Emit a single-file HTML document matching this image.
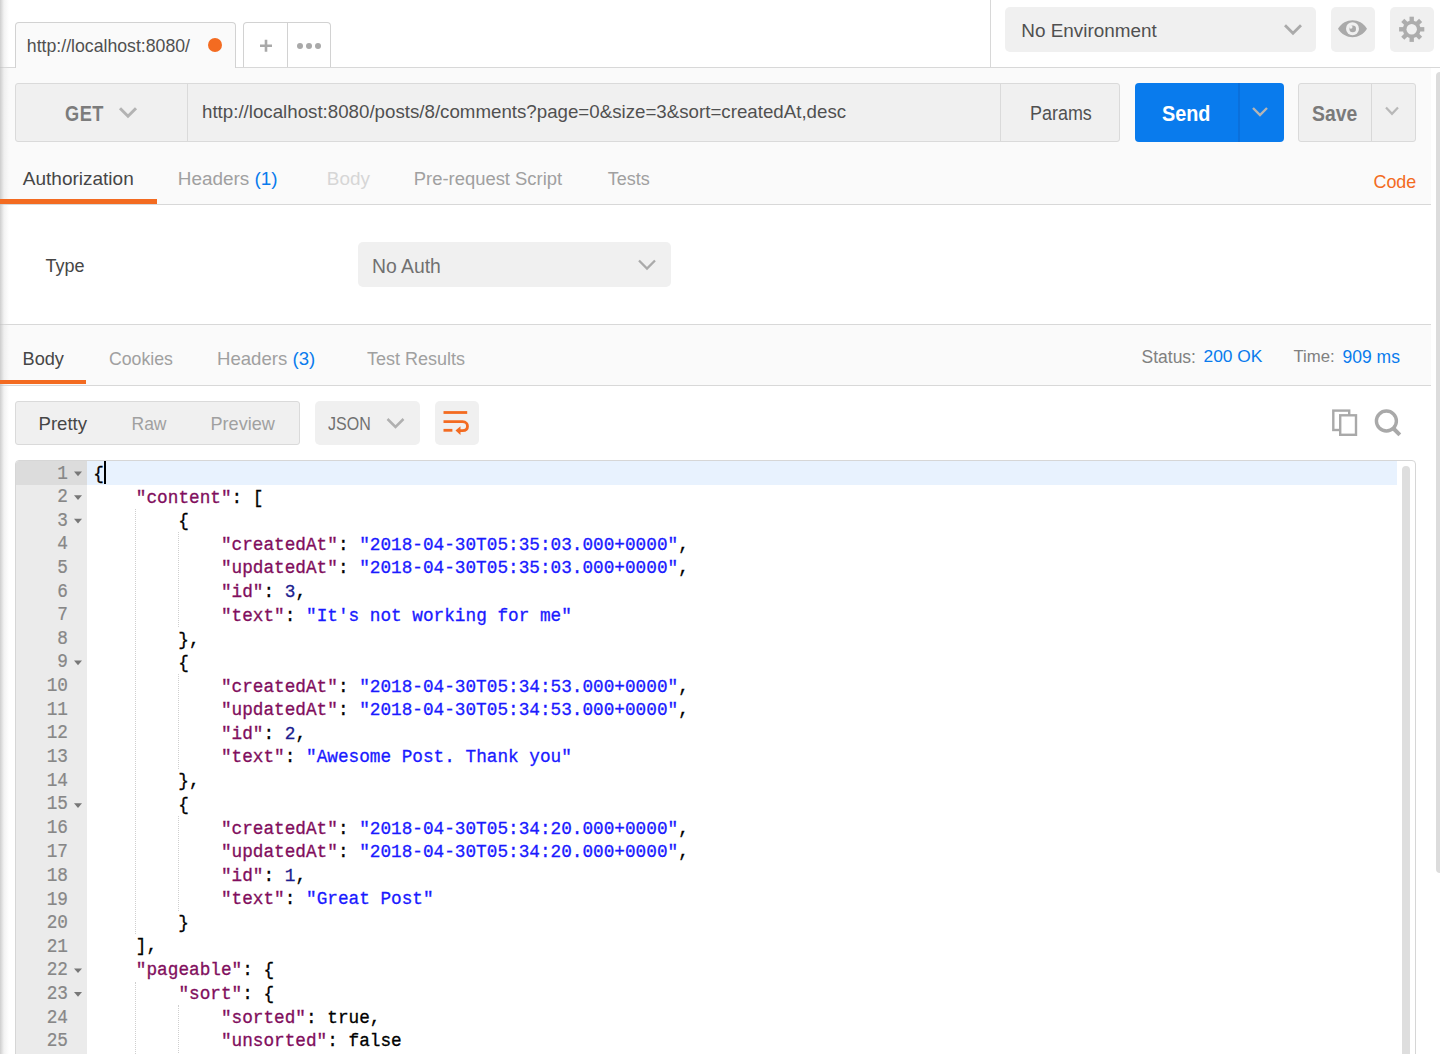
<!DOCTYPE html>
<html><head><meta charset="utf-8">
<style>
*{box-sizing:border-box;margin:0;padding:0}
html,body{width:1440px;height:1054px;overflow:hidden;background:#fafafa;font-family:"Liberation Sans",sans-serif;color:#505050}
.a{position:absolute}
.t{position:absolute;white-space:nowrap;line-height:1;transform-origin:0 0}
.box{position:absolute;background:#f0f0f0;border:1px solid #dadada;border-radius:3px}
svg{position:absolute;overflow:visible}
#gut{left:16px;top:460.8px;width:71px;font-family:"Liberation Mono",monospace;font-size:17.73px;color:#878787;transform:scaleY(1.18);transform-origin:0 0;-webkit-text-stroke:0.2px}
.gn{height:20.0339px;line-height:20.0339px;text-align:right;padding-right:19px;position:relative}
.fa{position:absolute;left:58px;top:9.1px;width:0;height:0;border-left:4px solid transparent;border-right:4px solid transparent;border-top:4.5px solid #777;-webkit-text-stroke:0}
#code{left:93.3px;top:461.8px;font-family:"Liberation Mono",monospace;font-size:17.73px;color:#000;white-space:pre;transform:scaleY(1.05);transform-origin:0 0;-webkit-text-stroke:0.3px}
.ln{height:22.514px;line-height:22.514px}
.k{color:#810e5d}.s{color:#1a1aff}.n{color:#1c1c8f}
.guide{position:absolute;width:0;border-left:1px dotted #cfcfcf}
</style></head><body>
<!-- top bar -->
<div class="a" style="left:0;top:0;width:1440px;height:67px;background:#fff"></div>
<div class="a" style="left:0;top:66.5px;width:1440px;height:1px;background:#d8d8d8"></div>
<div class="a" style="left:990px;top:0;width:1px;height:67px;background:#d8d8d8"></div>
<!-- request tab -->
<div class="a" style="left:15px;top:22px;width:221px;height:46px;background:#fafafa;border:1px solid #d2d2d2;border-bottom:none;border-radius:4px 4px 0 0"></div>
<div class="t" style="left:26.8px;top:37.9px;font-size:17.70px;color:#505050">http://localhost:8080/</div>
<div class="a" style="left:208px;top:38px;width:14px;height:14px;border-radius:50%;background:#f36b21"></div>
<div class="a" style="left:243px;top:22px;width:88px;height:45px;background:#fff;border:1px solid #d2d2d2;border-bottom:none;border-radius:4px 4px 0 0"></div>
<div class="a" style="left:287px;top:22px;width:1px;height:45px;background:#d2d2d2"></div>
<svg style="left:0;top:0" width="1" height="1"><path d="M260 45.7H272M266 39.7V51.7" stroke="#a9a9a9" stroke-width="2.6" fill="none"/><circle cx="300" cy="45.9" r="3" fill="#a9a9a9"/><circle cx="309" cy="45.9" r="3" fill="#a9a9a9"/><circle cx="318" cy="45.9" r="3" fill="#a9a9a9"/></svg>
<!-- env -->
<div class="box" style="left:1005px;top:7px;width:311px;height:45px;border:none;border-radius:5px"></div>
<div class="t" style="left:1021.3px;top:21.8px;font-size:18.90px;color:#505050">No Environment</div>
<div class="box" style="left:1331px;top:7px;width:44px;height:45px;border:none;border-radius:5px"></div>
<div class="box" style="left:1390px;top:7px;width:44px;height:45px;border:none;border-radius:5px"></div>
<svg style="left:0;top:0" width="1" height="1">
 <path d="M1285 25.3L1293 33.3L1301 25.3" stroke="#aaaaaa" stroke-width="2.8" fill="none"/>
 <path d="M1338 28.7C1345 17.5 1360 17.5 1367 28.7C1360 40 1345 40 1338 28.7Z" fill="#aaaaaa"/>
 <circle cx="1352.5" cy="28.7" r="6.5" fill="#f0f0f0"/>
 <circle cx="1352.7" cy="28.9" r="3.3" fill="#aaaaaa"/>
 <circle cx="1350.9" cy="27.1" r="1.6" fill="#f0f0f0"/>
</svg>
<svg style="left:0;top:0" width="1" height="1">
 <g transform="translate(1411.7 29.3)" fill="#adadad">
  <circle r="8.9" />
  <rect x="-2.2" y="-12.6" width="4.4" height="25.2"/>
  <rect x="-2.2" y="-12.6" width="4.4" height="25.2" transform="rotate(45)"/>
  <rect x="-2.2" y="-12.6" width="4.4" height="25.2" transform="rotate(90)"/>
  <rect x="-2.2" y="-12.6" width="4.4" height="25.2" transform="rotate(135)"/>
  <circle r="5.2" fill="#f0f0f0"/>
 </g>
</svg>

<!-- request row -->
<div class="box" style="left:15px;top:83px;width:1105px;height:58.5px"></div>
<div class="a" style="left:187px;top:84px;width:1px;height:56.5px;background:#dadada"></div>
<div class="a" style="left:1000px;top:84px;width:1px;height:56.5px;background:#dadada"></div>
<div class="t" style="left:65.0px;top:103.1px;font-size:22.00px;font-weight:bold;color:#7c7c7c;letter-spacing:0.6px;transform:scaleX(0.827)">GET</div>
<svg style="left:0;top:0" width="1" height="1"><path d="M120 108.2L128 116.2L136 108.2" stroke="#b3b3b3" stroke-width="3" fill="none"/></svg>
<div class="t" style="left:202.0px;top:102.6px;font-size:18.72px;color:#505050">http://localhost:8080/posts/8/comments?page=0&amp;size=3&amp;sort=createdAt,desc</div>
<div class="t" style="left:1029.6px;top:103.7px;font-size:19.30px;color:#505050;transform:scaleX(0.93)">Params</div>
<div class="a" style="left:1135px;top:82.6px;width:148.5px;height:59px;background:#097bed;border-radius:4px"></div>
<div class="a" style="left:1238px;top:82.6px;width:1.5px;height:59px;background:#0a70dc"></div>
<div class="t" style="left:1161.5px;top:102.5px;font-size:22.00px;font-weight:bold;color:#fff;transform:scaleX(0.90)">Send</div>
<svg style="left:0;top:0" width="1" height="1"><path d="M1253 108L1260 115L1267 108" stroke="#b5b5b5" stroke-width="2.4" fill="none"/></svg>
<div class="box" style="left:1298px;top:83px;width:118px;height:58.5px"></div>
<div class="a" style="left:1370.5px;top:84px;width:1.2px;height:56.5px;background:#d8d8d8"></div>
<div class="t" style="left:1311.5px;top:102.5px;font-size:22.00px;font-weight:bold;color:#7a7a7a;transform:scaleX(0.88)">Save</div>
<svg style="left:0;top:0" width="1" height="1"><path d="M1386 107.5L1392 113.8L1398 107.5" stroke="#b8b8b8" stroke-width="2.2" fill="none"/></svg>

<!-- request tabs -->
<div class="a" style="left:0;top:204px;width:1431px;height:1px;background:#d8d8d8"></div>
<div class="a" style="left:0;top:199.4px;width:157px;height:4.5px;background:#f36b21;z-index:3"></div>
<div class="t" style="left:22.8px;top:169.0px;font-size:19px;color:#464646">Authorization</div>
<div class="t" style="left:177.8px;top:169.5px;font-size:18.90px;color:#a0a0a0">Headers <span style="color:#097bed">(1)</span></div>
<div class="t" style="left:326.8px;top:170.1px;font-size:18.90px;color:#d6d6d6">Body</div>
<div class="t" style="left:413.8px;top:169.6px;font-size:18.42px;color:#a0a0a0">Pre-request Script</div>
<div class="t" style="left:607.8px;top:169.9px;font-size:18px;color:#a0a0a0">Tests</div>
<div class="t" style="left:1373.5px;top:174.0px;font-size:17.90px;color:#f36b21">Code</div>

<!-- auth -->
<div class="a" style="left:0;top:205px;width:1431px;height:119px;background:#fff"></div>
<div class="a" style="left:0;top:323.5px;width:1431px;height:1px;background:#d8d8d8"></div>
<div class="t" style="left:45.5px;top:257.0px;font-size:18px;color:#464646">Type</div>
<div class="box" style="left:358px;top:242.2px;width:313px;height:44.5px;border:none;border-radius:5px"></div>
<div class="t" style="left:372.0px;top:257.3px;font-size:19.35px;color:#707070">No Auth</div>
<svg style="left:0;top:0" width="1" height="1"><path d="M639 260.5L647 268.5L655 260.5" stroke="#aaaaaa" stroke-width="2.3" fill="none"/></svg>

<!-- response tabs -->
<div class="a" style="left:0;top:384.5px;width:1431px;height:1.2px;background:#d8d8d8"></div>
<div class="a" style="left:0;top:379.8px;width:86px;height:4.4px;background:#f36b21;z-index:3"></div>
<div class="t" style="left:22.5px;top:349.9px;font-size:18.2px;color:#464646">Body</div>
<div class="t" style="left:109.0px;top:351.0px;font-size:17.7px;color:#a0a0a0">Cookies</div>
<div class="t" style="left:217.0px;top:349.8px;font-size:18.60px;color:#a0a0a0">Headers <span style="color:#097bed">(3)</span></div>
<div class="t" style="left:367.0px;top:350.1px;font-size:18px;color:#a0a0a0">Test Results</div>
<div class="t" style="left:1141.5px;top:348.5px;font-size:17.50px;color:#808080">Status:</div>
<div class="t" style="left:1203.5px;top:348.0px;font-size:17.40px;color:#097bed">200 OK</div>
<div class="t" style="left:1293.5px;top:349.3px;font-size:16.75px;color:#808080">Time:</div>
<div class="t" style="left:1342.5px;top:348.7px;font-size:17.5px;color:#097bed">909 ms</div>

<!-- response body -->
<div class="a" style="left:0;top:385.7px;width:1431px;height:669px;background:#fff"></div>
<div class="box" style="left:15px;top:401px;width:285px;height:43.5px"></div>
<div class="t" style="left:38.5px;top:415.3px;font-size:18.6px;color:#464646">Pretty</div>
<div class="t" style="left:131.5px;top:415.9px;font-size:17.5px;color:#a0a0a0">Raw</div>
<div class="t" style="left:210.5px;top:415.4px;font-size:18.1px;color:#a0a0a0">Preview</div>
<div class="box" style="left:315px;top:401px;width:105px;height:44px;border:none;border-radius:5px"></div>
<div class="t" style="left:328.0px;top:415.3px;font-size:18px;color:#707070;transform:scaleX(0.89)">JSON</div>
<svg style="left:0;top:0" width="1" height="1"><path d="M387.5 419L395.5 427L403.5 419" stroke="#b0b0b0" stroke-width="2.5" fill="none"/></svg>
<div class="box" style="left:434.5px;top:401px;width:44.5px;height:44px;border:none;border-radius:5px"></div>
<svg style="left:0;top:0" width="1" height="1" fill="none" stroke="#f36b21" stroke-width="2.8">
 <path d="M443.5 412.5H467.2"/>
 <path d="M443.5 421.7H462.5C466 421.7 467.5 424 467.5 426.2C467.5 428.5 466 430.6 462.5 430.6H458"/>
 <path d="M443.5 430.3H452.4"/>
 <path d="M455.5 430.6L460.5 426.3V434.9Z" fill="#f36b21" stroke="none"/>
</svg>
<svg style="left:0;top:0" width="1" height="1" fill="none" stroke="#a9a9a9" stroke-width="2.4">
 <rect x="1333.3" y="410.6" width="15.9" height="19.4"/>
 <rect x="1340.2" y="415.3" width="15.8" height="19.5" fill="#fff"/>
 <circle cx="1386.4" cy="421" r="10" stroke-width="3.4"/>
 <path d="M1393 428L1399.8 434.8" stroke-width="4"/>
</svg>

<!-- editor -->
<div class="a" style="left:15px;top:460px;width:1401px;height:620px;border:1px solid #d6d6d6;border-radius:4px;background:#fff"></div>
<div class="a" style="left:16px;top:461px;width:71px;height:600px;background:#ebebeb;border-radius:3px 0 0 0"></div>
<div class="a" style="left:87px;top:461.3px;width:1310px;height:23.4px;background:#e8f2fe"></div>
<div class="a" style="left:16px;top:461.3px;width:71px;height:23.4px;background:#dcdcdc;border-radius:3px 0 0 0"></div>
<div class="a" style="left:1402px;top:466px;width:8px;height:600px;background:#dedede;border-radius:4px"></div>
<div class="guide" style="left:135.4px;top:508.5px;height:425.5px"></div>
<div class="guide" style="left:178px;top:532.2px;height:94.6px"></div>
<div class="guide" style="left:178px;top:674px;height:94.6px"></div>
<div class="guide" style="left:178px;top:816px;height:94.6px"></div>
<div class="guide" style="left:135.4px;top:981.5px;height:80px"></div>
<div class="guide" style="left:178px;top:1005px;height:60px"></div>
<div class="a" style="left:103.6px;top:461.3px;width:2.4px;height:23.2px;background:#000"></div>
<div id="gut" class="a"><div class="gn">1<i class="fa"></i></div><div class="gn">2<i class="fa"></i></div><div class="gn">3<i class="fa"></i></div><div class="gn">4</div><div class="gn">5</div><div class="gn">6</div><div class="gn">7</div><div class="gn">8</div><div class="gn">9<i class="fa"></i></div><div class="gn">10</div><div class="gn">11</div><div class="gn">12</div><div class="gn">13</div><div class="gn">14</div><div class="gn">15<i class="fa"></i></div><div class="gn">16</div><div class="gn">17</div><div class="gn">18</div><div class="gn">19</div><div class="gn">20</div><div class="gn">21</div><div class="gn">22<i class="fa"></i></div><div class="gn">23<i class="fa"></i></div><div class="gn">24</div><div class="gn">25</div></div>
<div id="code" class="a"><div class="ln">{</div><div class="ln">&nbsp;&nbsp;&nbsp;&nbsp;<span class="k">"content"</span>: [</div><div class="ln">&nbsp;&nbsp;&nbsp;&nbsp;&nbsp;&nbsp;&nbsp;&nbsp;{</div><div class="ln">&nbsp;&nbsp;&nbsp;&nbsp;&nbsp;&nbsp;&nbsp;&nbsp;&nbsp;&nbsp;&nbsp;&nbsp;<span class="k">"createdAt"</span>: <span class="s">"2018-04-30T05:35:03.000+0000"</span>,</div><div class="ln">&nbsp;&nbsp;&nbsp;&nbsp;&nbsp;&nbsp;&nbsp;&nbsp;&nbsp;&nbsp;&nbsp;&nbsp;<span class="k">"updatedAt"</span>: <span class="s">"2018-04-30T05:35:03.000+0000"</span>,</div><div class="ln">&nbsp;&nbsp;&nbsp;&nbsp;&nbsp;&nbsp;&nbsp;&nbsp;&nbsp;&nbsp;&nbsp;&nbsp;<span class="k">"id"</span>: <span class="n">3</span>,</div><div class="ln">&nbsp;&nbsp;&nbsp;&nbsp;&nbsp;&nbsp;&nbsp;&nbsp;&nbsp;&nbsp;&nbsp;&nbsp;<span class="k">"text"</span>: <span class="s">"It's not working for me"</span></div><div class="ln">&nbsp;&nbsp;&nbsp;&nbsp;&nbsp;&nbsp;&nbsp;&nbsp;},</div><div class="ln">&nbsp;&nbsp;&nbsp;&nbsp;&nbsp;&nbsp;&nbsp;&nbsp;{</div><div class="ln">&nbsp;&nbsp;&nbsp;&nbsp;&nbsp;&nbsp;&nbsp;&nbsp;&nbsp;&nbsp;&nbsp;&nbsp;<span class="k">"createdAt"</span>: <span class="s">"2018-04-30T05:34:53.000+0000"</span>,</div><div class="ln">&nbsp;&nbsp;&nbsp;&nbsp;&nbsp;&nbsp;&nbsp;&nbsp;&nbsp;&nbsp;&nbsp;&nbsp;<span class="k">"updatedAt"</span>: <span class="s">"2018-04-30T05:34:53.000+0000"</span>,</div><div class="ln">&nbsp;&nbsp;&nbsp;&nbsp;&nbsp;&nbsp;&nbsp;&nbsp;&nbsp;&nbsp;&nbsp;&nbsp;<span class="k">"id"</span>: <span class="n">2</span>,</div><div class="ln">&nbsp;&nbsp;&nbsp;&nbsp;&nbsp;&nbsp;&nbsp;&nbsp;&nbsp;&nbsp;&nbsp;&nbsp;<span class="k">"text"</span>: <span class="s">"Awesome Post. Thank you"</span></div><div class="ln">&nbsp;&nbsp;&nbsp;&nbsp;&nbsp;&nbsp;&nbsp;&nbsp;},</div><div class="ln">&nbsp;&nbsp;&nbsp;&nbsp;&nbsp;&nbsp;&nbsp;&nbsp;{</div><div class="ln">&nbsp;&nbsp;&nbsp;&nbsp;&nbsp;&nbsp;&nbsp;&nbsp;&nbsp;&nbsp;&nbsp;&nbsp;<span class="k">"createdAt"</span>: <span class="s">"2018-04-30T05:34:20.000+0000"</span>,</div><div class="ln">&nbsp;&nbsp;&nbsp;&nbsp;&nbsp;&nbsp;&nbsp;&nbsp;&nbsp;&nbsp;&nbsp;&nbsp;<span class="k">"updatedAt"</span>: <span class="s">"2018-04-30T05:34:20.000+0000"</span>,</div><div class="ln">&nbsp;&nbsp;&nbsp;&nbsp;&nbsp;&nbsp;&nbsp;&nbsp;&nbsp;&nbsp;&nbsp;&nbsp;<span class="k">"id"</span>: <span class="n">1</span>,</div><div class="ln">&nbsp;&nbsp;&nbsp;&nbsp;&nbsp;&nbsp;&nbsp;&nbsp;&nbsp;&nbsp;&nbsp;&nbsp;<span class="k">"text"</span>: <span class="s">"Great Post"</span></div><div class="ln">&nbsp;&nbsp;&nbsp;&nbsp;&nbsp;&nbsp;&nbsp;&nbsp;}</div><div class="ln">&nbsp;&nbsp;&nbsp;&nbsp;],</div><div class="ln">&nbsp;&nbsp;&nbsp;&nbsp;<span class="k">"pageable"</span>: {</div><div class="ln">&nbsp;&nbsp;&nbsp;&nbsp;&nbsp;&nbsp;&nbsp;&nbsp;<span class="k">"sort"</span>: {</div><div class="ln">&nbsp;&nbsp;&nbsp;&nbsp;&nbsp;&nbsp;&nbsp;&nbsp;&nbsp;&nbsp;&nbsp;&nbsp;<span class="k">"sorted"</span>: true,</div><div class="ln">&nbsp;&nbsp;&nbsp;&nbsp;&nbsp;&nbsp;&nbsp;&nbsp;&nbsp;&nbsp;&nbsp;&nbsp;<span class="k">"unsorted"</span>: false</div></div>

<!-- page scrollbar -->
<div class="a" style="left:1431px;top:67.5px;width:9px;height:987px;background:#fff"></div>
<div class="a" style="left:1436px;top:72px;width:8px;height:801px;background:#dcdcdc;border-radius:4px"></div>
<div class="a" style="z-index:2;left:0;top:0;width:9px;height:1054px;background:linear-gradient(to right,rgba(190,190,190,.75),rgba(220,220,220,.35) 45%,rgba(250,250,250,0))"></div>
</body></html>
